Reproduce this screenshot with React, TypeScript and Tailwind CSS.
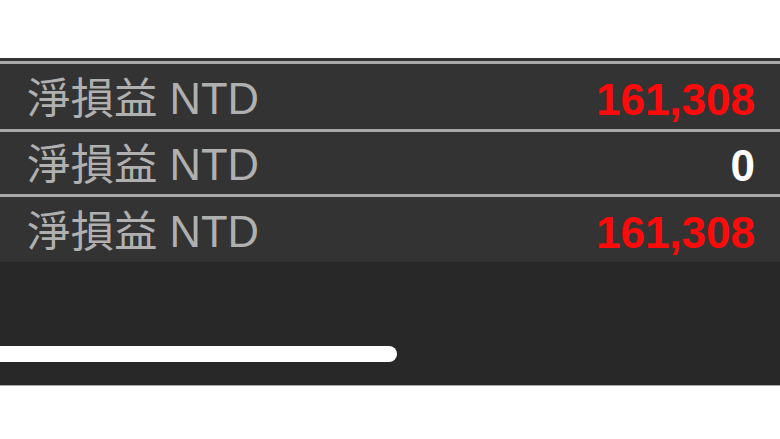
export default function App() {
  const rows = [
    { label: "淨損益 NTD", value: "161,308", red: true, h: "h-[65px]" },
    { label: "淨損益 NTD", value: "0", red: false, h: "h-[62px]" },
    { label: "淨損益 NTD", value: "161,308", red: true, h: "h-[65px]" },
  ];

  return (
    <div className="w-[780px] h-[439px] bg-white overflow-hidden">
      <div className="h-[58px] bg-white" />
      <div className="h-[3px] bg-[#333333]" />
      {rows.map((row, i) => (
        <div key={i}>
          <div className="h-[3px] bg-[#a9a9a9]" />
          <div
            className={`${row.h} bg-[#333333] flex items-center justify-between pl-[27px] pr-[25px] pt-[6px]`}
          >
            <span
              className="text-[43.5px] leading-none text-[#b0b0b0]"
              style={{ fontFamily: '"Liberation Sans", "Noto Sans CJK TC", sans-serif' }}
            >
              {row.label}
            </span>
            <span
              className={`text-[44px] leading-none font-bold ${row.red ? "text-[#ff0a0a]" : "text-white"}`}
              style={{ fontFamily: '"Liberation Sans", Arial, sans-serif' }}
            >
              {row.value}
            </span>
          </div>
        </div>
      ))}
      <div className="h-[123px] bg-[#282828] flex flex-col justify-end pb-[23px]">
        <div className="h-[16px] w-[397px] bg-white rounded-r-full" />
      </div>
      <div className="h-[1px] bg-[#a9a9a9]" />
    </div>
  );
}
